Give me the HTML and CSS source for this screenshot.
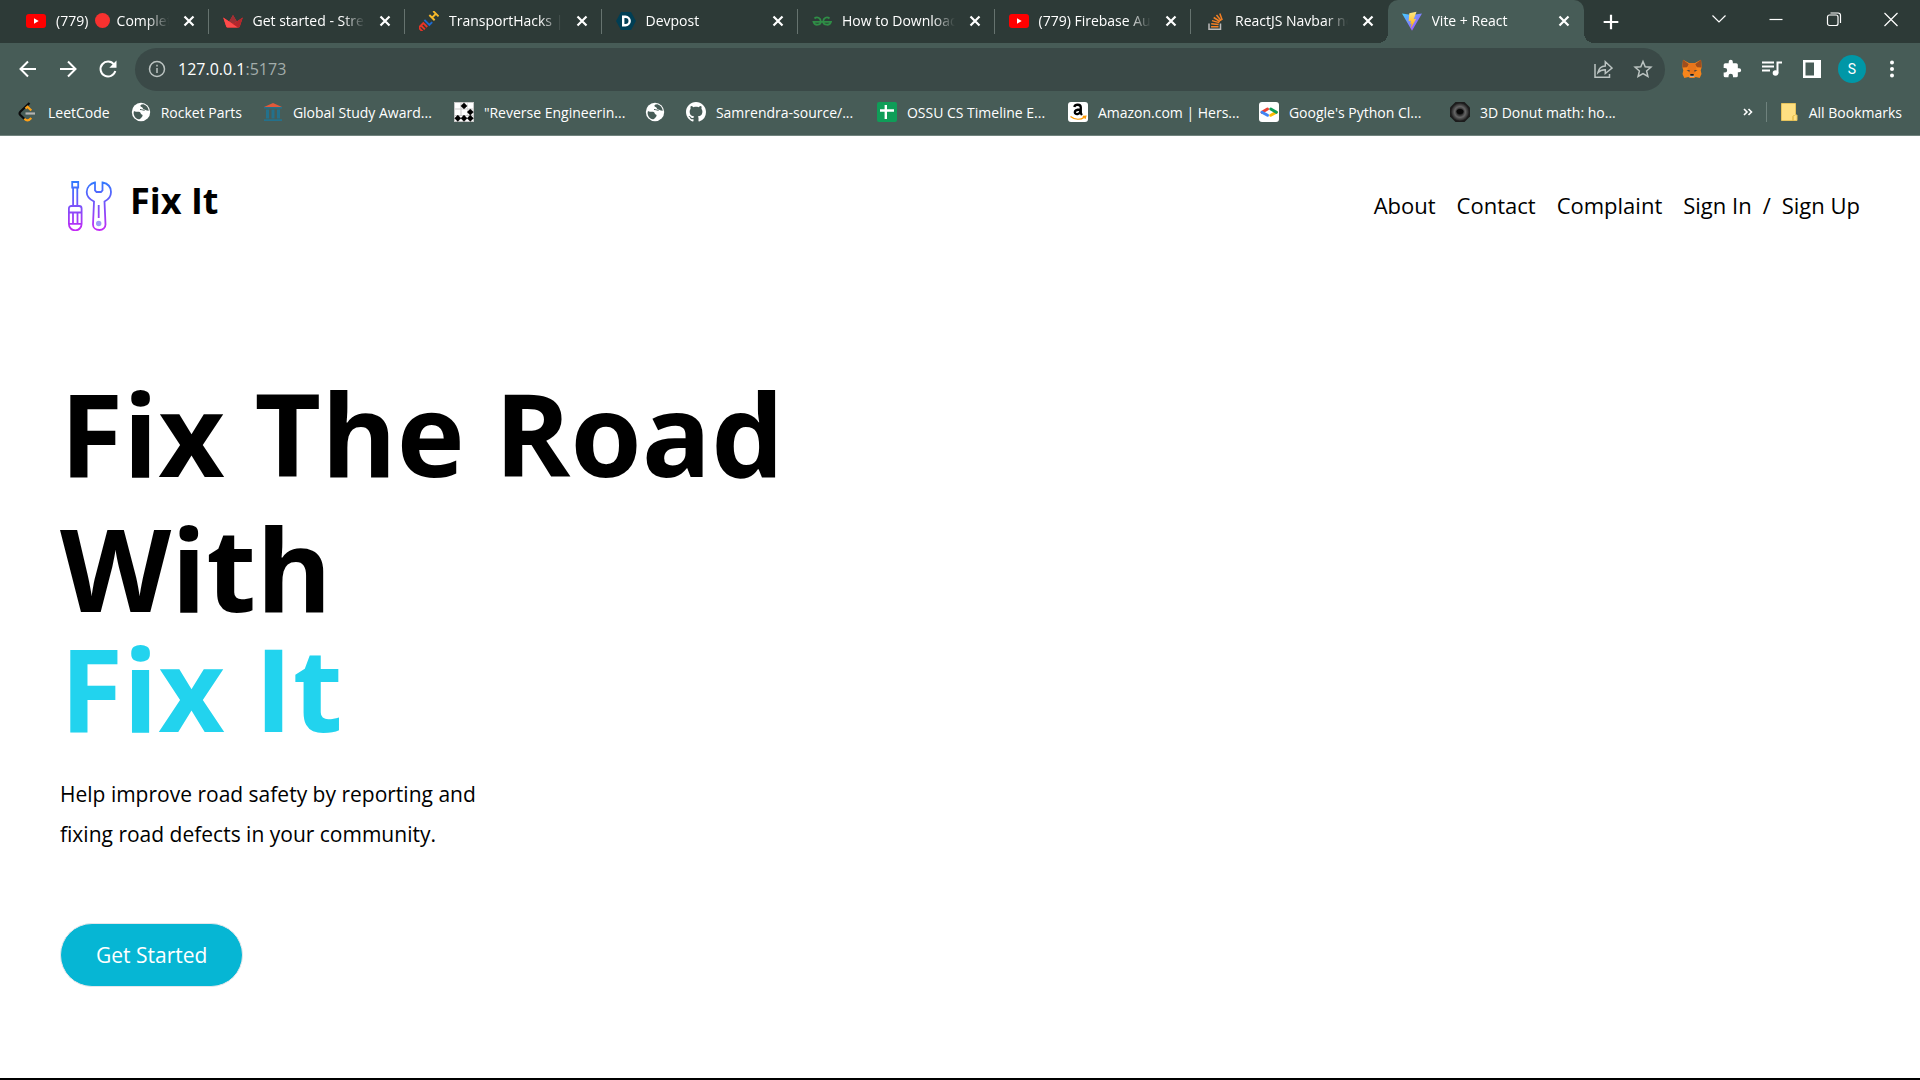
FILE: index.html
```html
<!DOCTYPE html>
<html lang="en">
<head>
<meta charset="utf-8">
<meta name="viewport" content="width=device-width, initial-scale=1">
<title>Vite + React</title>
<link rel="stylesheet" href="styles.css">
</head>
<body>
<svg class="defs" aria-hidden="true">
  <defs>
    <linearGradient id="vite-body" x1="0" y1="0" x2="1" y2="1"><stop offset="0" stop-color="#41d1ff"/><stop offset="1" stop-color="#bd34fe"/></linearGradient>
    <linearGradient id="vite-bolt" x1="0" y1="0" x2="0" y2="1"><stop offset="0" stop-color="#ffea83"/><stop offset="1" stop-color="#ffa800"/></linearGradient>
    <linearGradient id="tools" gradientUnits="userSpaceOnUse" x1="0" y1="0" x2="0" y2="50"><stop offset="0" stop-color="#2f7bff"/><stop offset="1" stop-color="#c528f5"/></linearGradient>
    <radialGradient id="donut"><stop offset="0" stop-color="#0c0c0c"/><stop offset=".25" stop-color="#1a1a1a"/><stop offset=".6" stop-color="#666"/><stop offset="1" stop-color="#222"/></radialGradient>
    <symbol id="close" viewBox="0 0 24 24"><path d="M7.500 7.500l9 9m0-9l-9 9" stroke="#fff" stroke-width="2.200"/></symbol>
    <symbol id="youtube" viewBox="0 0 20 20"><rect y="3" width="20" height="14" rx="3" fill="#f00"/><path d="M8 7.300v5.400l4.700-2.700z" fill="#fff"/></symbol>
    <symbol id="globe" viewBox="0 0 20 20"><circle cx="10" cy="10" r="9.200" fill="#fff"/><path d="M3 9c1 1 3 .6 5 .8 2 .3 1.200 2.200 2.800 2.600 1.500.4.600 2.400-.8 3.600-.8.700-1.200 1.400-2.600 1.300C3.500 16 1.800 12 3 9zM10.500 2.500c-2 1-.7 2.500.5 2.700 1 .2.600 2 2 2.300 1.700.3 2.600 1.300 4.800 1.200-.4-3-2.500-5.700-5.300-6.400z" fill="#475c57"/><path d="M9 7.500c2 0 3 .7 4.500 1" stroke="#475c57" stroke-width="1" fill="none"/></symbol>
  </defs>
</svg>

<header class="browser">
  <div class="tabstrip">
    <div class="tabs">
      <div class="tab">
        <svg class="favicon"><use href="#youtube"/></svg>
        <span class="tab-title">(779) <i class="live"></i> Complet</span>
        <button class="tab-close" aria-label="Close tab"><svg><use href="#close"/></svg></button>
      </div>
      <div class="tab">
        <svg class="favicon" viewBox="0 0 20 20"><path d="M.2 6.500l6 4L10 4l3.800 6.500 6-4-3 9c-.2.700-.7 1-1.300 1h-11c-.6 0-1.100-.3-1.300-1z" fill="#ff2b2b"/><path d="M6.200 10.500L10 4l3.800 6.500L10 13z" fill="#9c3035"/><path d="M.2 6.500L15 16.500H4.500c-.6 0-1.100-.3-1.300-1z" fill="#ff4b4b"/><path d="M19.800 6.500l-6 4-3.800 2.500 5 3.500c1.200 0 1.600-.5 1.800-1z" fill="#b3272c"/></svg>
        <span class="tab-title">Get started - Strea</span>
        <button class="tab-close" aria-label="Close tab"><svg><use href="#close"/></svg></button>
      </div>
      <div class="tab">
        <svg class="favicon" viewBox="0 0 20 20" fill="none" stroke-width="1.900"><g transform="rotate(-45 10 10)"><path d="M-2 13V7.500h6.500V13M1.200 7.500V13" stroke="#e73427"/><path d="M7.500 6v7h4" stroke="#1d6ad0"/><path d="M14.500 6v7.500M20 6v7.500M14.500 9.800H20" stroke="#f8b92a"/></g></svg>
        <span class="tab-title">TransportHacks | M</span>
        <button class="tab-close" aria-label="Close tab"><svg><use href="#close"/></svg></button>
      </div>
      <div class="tab">
        <svg class="favicon" viewBox="0 0 20 20"><path d="M5 1h10l5 9-5 9H5l-5-9z" fill="#003e54"/><path d="M7.200 5.800h2.300a4.200 4.200 0 010 8.400H7.200z" fill="none" stroke="#fff" stroke-width="2.400"/></svg>
        <span class="tab-title">Devpost</span>
        <button class="tab-close" aria-label="Close tab"><svg><use href="#close"/></svg></button>
      </div>
      <div class="tab">
        <svg class="favicon" viewBox="0 0 20 20" fill="none" stroke="#2f8d46" stroke-width="1.800"><path d="M2.500 7.500C5 5 8.800 7 8.800 10.500c0 4-6.300 4.500-7.300.3H19c-1 4.200-7.800 3.700-7.800-.3C11.200 7 15 5 17.500 7.500"/></svg>
        <span class="tab-title">How to Download</span>
        <button class="tab-close" aria-label="Close tab"><svg><use href="#close"/></svg></button>
      </div>
      <div class="tab">
        <svg class="favicon"><use href="#youtube"/></svg>
        <span class="tab-title">(779) Firebase Aut</span>
        <button class="tab-close" aria-label="Close tab"><svg><use href="#close"/></svg></button>
      </div>
      <div class="tab">
        <svg class="favicon" viewBox="0 0 20 20" fill="none" stroke-width="1.500"><path d="M4 12.500v5.800h11.500v-5.800" stroke="#bcbbbb"/><path d="M6 15.800h7.500M6.200 12.800l7.400.8M7 9.600l7.200 2M8.700 6.500l6.300 4M11.500 4l4.700 5.700M14.800 2.500l2.400 6.500" stroke="#f48024"/></svg>
        <span class="tab-title">ReactJS Navbar no</span>
        <button class="tab-close" aria-label="Close tab"><svg><use href="#close"/></svg></button>
      </div>
      <div class="tab tab-active">
        <svg class="favicon" viewBox="0 0 20 20"><path d="M0 2.500l10 1.600 10-1.600-10 17.300z" fill="url(#vite-body)"/><path d="M14.500.8L7.300 2.200l-.6 8 2.200-.5-.7 3.200 1.500-.4-1 5 5.500-9.800-2.500.5z" fill="url(#vite-bolt)"/></svg>
        <span class="tab-title">Vite + React</span>
        <button class="tab-close" aria-label="Close tab"><svg><use href="#close"/></svg></button>
      </div>
    </div>
    <button class="new-tab" aria-label="New tab"><svg viewBox="0 0 24 24"><path d="M12 4v16M4 12h16" stroke="#fff" stroke-width="2.400"/></svg></button>
    <div class="window-controls">
      <button aria-label="Search tabs"><svg viewBox="0 0 24 24"><path d="M5.500 8.500l6.500 6.500 6.500-6.500"/></svg></button>
      <button aria-label="Minimize"><svg viewBox="0 0 24 24"><path d="M5.500 12.500h13"/></svg></button>
      <button aria-label="Restore"><svg viewBox="0 0 24 24"><rect x="5.500" y="8" width="10.500" height="10.500" rx="2"/><path d="M8.500 6h7.500a2.500 2.500 0 012.500 2.500v7.500"/></svg></button>
      <button aria-label="Close window"><svg viewBox="0 0 24 24"><path d="M5.500 6l13 13m0-13l-13 13"/></svg></button>
    </div>
  </div>

  <div class="toolbar">
    <div class="nav-buttons">
      <button aria-label="Back"><svg viewBox="0 0 24 24"><path d="M20 12H4.500M12 4.500L4.500 12l7.500 7.500"/></svg></button>
      <button aria-label="Forward"><svg viewBox="0 0 24 24"><path d="M4 12h15.500M12 4.500l7.500 7.500-7.500 7.500"/></svg></button>
      <button aria-label="Reload"><svg viewBox="0 0 24 24"><path d="M18 7.500A7.500 7.500 0 1019.300 14"/><path d="M20.500 3.500v7.200h-7.200z" fill="#fff" stroke="none"/></svg></button>
    </div>
    <div class="omnibox">
      <svg class="omni-icon" viewBox="0 0 20 20"><circle cx="10" cy="10" r="7.500"/><path d="M10 9v5M10 5.800v1.700"/></svg>
      <div class="url">127.0.0.1<span>:5173</span></div>
      <svg class="omni-icon share" viewBox="0 0 20 20"><path d="M2 5v13.300h14.500V15M5 13.500c.8-4.300 3-6.300 7.300-6.500V2.800L19 9l-6.700 5.500v-3.800c-3.500 0-5.500.7-7.300 2.800z"/></svg>
      <svg class="omni-icon" viewBox="0 0 20 20"><path d="M10 2.500l2.200 5.200 5.700.5-4.300 3.700 1.300 5.500-4.900-2.900-4.900 2.900 1.300-5.500-4.300-3.700 5.700-.5z"/></svg>
    </div>
    <div class="extensions">
      <button aria-label="Wallet"><svg viewBox="0 0 20 20"><path d="M1 .8L7 4h6l6-3.200.7 7.200-1 3.500.8 3.500-1.800 4-4-1-1.700 1H8l-1.700-1-4 1L.5 15l.8-3.500-1-3.500z" fill="#f6851b"/><path d="M1 .8l6 4.500-2 3L.3 8.500zM19 .8l-6 4.500 2 3 4.700.2z" fill="#a04e1d"/><path d="M7 4h6l1.500 6-2.500 5.500H8L5.500 10z" fill="#e8761b"/><path d="M4.500 11l3.500.5-.8 1.300zM15.500 11l-3.500.5.8 1.300z" fill="#233447"/><path d="M7.800 15.500h4.400v2.500H7.800z" fill="#c0ad9e"/><path d="M8.300 15h3.400v1.700H8.300z" fill="#161616"/></svg></button>
      <button aria-label="Extensions"><svg viewBox="0 0 24 24"><path d="M20.500 11H19V7a2 2 0 00-2-2h-4V3.500a2.500 2.500 0 00-5 0V5H4a2 2 0 00-2 2v3.800h1.500a2.700 2.700 0 010 5.400H2V20a2 2 0 002 2h3.800v-1.500a2.700 2.700 0 015.400 0V22H17a2 2 0 002-2v-4h1.500a2.500 2.500 0 000-5z" fill="#fff"/></svg></button>
      <button aria-label="Media"><svg viewBox="0 0 20 20" fill="none" stroke="#fff" stroke-width="2"><path d="M0 3.500h12M0 7.500h12M0 11.500h8M15.500 14.500V3.500H20"/><circle cx="13.500" cy="14" r="2.800" fill="#fff" stroke="none"/></svg></button>
      <button aria-label="Side panel"><svg viewBox="0 0 20 20"><path d="M1 1h18v18H1zM3.500 3.500v13H12v-13z" fill="#fff" fill-rule="evenodd"/></svg></button>
      <button aria-label="Profile"><span class="avatar">S</span></button>
      <button aria-label="Menu"><svg viewBox="0 0 20 20" fill="#fff"><circle cx="10" cy="3.500" r="2"/><circle cx="10" cy="10" r="2"/><circle cx="10" cy="16.500" r="2"/></svg></button>
    </div>
  </div>

  <nav class="bookmarks" aria-label="Bookmarks">
    <a href="#"><svg viewBox="0 0 20 20" fill="none" stroke-width="2.200"><path d="M11.500 1L2.300 9.800c-1 1-1 2.200 0 3.200L6.500 17" stroke="#0b0b0b"/><path d="M7.500 6.500l2-1.800 3.800 3.800M6.300 16.800c2.300 2.200 4 2.500 7-.8" stroke="#ffa116"/><path d="M7.500 11.500H17" stroke="#b3b3b3"/></svg>LeetCode</a>
    <a href="#"><svg><use href="#globe"/></svg>Rocket Parts</a>
    <a href="#" class="cut"><svg viewBox="0 0 20 20"><path d="M1 5l9-4 9 4z" fill="#e2593a"/><path d="M1 5h18v1.500H1zM3 7.500h3v9H3zM8.500 7.500h3v9h-3zM14 7.500h3v9h-3zM1 17.300h18V19H1z" fill="#23718c"/></svg>Global Study Award...</a>
    <a href="#" class="cut"><svg viewBox="0 0 20 20"><path fill="#c8c8c8" d="M0 0h20v20H0z"/><path d="M1 1h5.500v5.500H1zM7.500 1H13v5.500H7.500zM13.500 1H19v5.500h-5.500zM1 7.500h5.500V13H1zM7.500 7.500H13V13H7.500zM13.500 7.500H19V13h-5.500zM1 14h18v5H1z" fill="#fff"/><path d="M10 .7l3.200 3.200L10 7.100 6.800 3.900zM16.300 6.900l3.200 3.200-3.200 3.200-3.200-3.200zM3.800 13.100L7 16.300l-3.200 3.200-3.200-3.200zM10 13.100l3.200 3.200-3.200 3.200-3.200-3.200zM16.300 13.100l3.200 3.200-3.200 3.200-3.200-3.200z" stroke="#000" stroke-width=".3"/></svg>"Reverse Engineerin...</a>
    <a href="#" aria-label="Untitled bookmark"><svg><use href="#globe"/></svg></a>
    <a href="#" class="cut"><svg viewBox="0 0 16 16"><path fill="#fff" d="M8 0C3.580 0 0 3.580 0 8c0 3.540 2.290 6.530 5.470 7.590.4.070.55-.17.55-.38 0-.19-.01-.82-.01-1.490-2.010.37-2.530-.49-2.690-.94-.09-.23-.48-.94-.82-1.130-.28-.15-.68-.52-.01-.53.63-.01 1.080.58 1.230.82.72 1.210 1.870.87 2.330.66.070-.52.28-.87.51-1.070-1.780-.2-3.640-.89-3.640-3.950 0-.87.31-1.590.82-2.150-.08-.2-.36-1.020.080-2.120 0 0 .67-.21 2.200.82.64-.18 1.320-.27 2-.27s1.360.09 2 .27c1.530-1.040 2.200-.82 2.200-.82.44 1.100.16 1.920.080 2.120.51.56.82 1.270.82 2.150 0 3.070-1.870 3.750-3.650 3.950.29.25.54.73.54 1.480 0 1.070-.01 1.930-.01 2.200 0 .21.15.46.55.38A8.010 8.010 0 0016 8c0-4.420-3.580-8-8-8z"/></svg>Samrendra-source/...</a>
    <a href="#" class="cut"><svg viewBox="0 0 20 20"><rect width="20" height="20" rx="2" fill="#0f9d58"/><path d="M8.800 3v14M3 8.500h14" stroke="#fff" stroke-width="2.400"/></svg>OSSU CS Timeline E...</a>
    <a href="#" class="cut"><svg viewBox="0 0 20 20"><rect width="20" height="20" rx="3" fill="#fff"/><path d="M6.300 5C7 2 12.800 1.800 12.800 5.500v5c0 1.200.5 1.600 1.200 2.500M12.500 7.500c-4 0-5.700.7-5.700 2.800 0 3 5.500 2.200 5.700-1.500" fill="none" stroke="#000" stroke-width="2.300"/><path d="M2.500 14.500c4.500 3.500 10 3.500 14 .6M14.800 14.300l3-.1-.8 2.600" fill="none" stroke="#f90" stroke-width="1.300"/></svg>Amazon.com | Hers...</a>
    <a href="#" class="cut"><svg viewBox="0 0 20 20" fill="none" stroke-width="3"><rect width="20" height="20" rx="3" fill="#fff"/><path d="M3 10.300L8.500 7" stroke="#ea4335" stroke-linecap="round"/><path d="M3 10.300l5.500 3" stroke="#4285f4" stroke-linecap="round"/><path d="M11.800 13.300l5.500-3" stroke="#fbbc04" stroke-linecap="round"/><path d="M11.800 7l5.500 3.300" stroke="#0f9d58" stroke-linecap="round"/></svg>Google's Python Cl...</a>
    <a href="#" class="cut"><svg viewBox="0 0 20 20"><path d="M5.500 0h9L20 5.500v9L14.500 20h-9L0 14.500v-9z" fill="#1c1c1c"/><circle cx="10" cy="10" r="9" fill="url(#donut)"/><ellipse cx="10" cy="9.500" rx="3.500" ry="2.500" fill="#080808"/></svg>3D Donut math: ho...</a>
    <button class="more" aria-label="More bookmarks"><svg viewBox="0 0 10 10"><path d="M1 2l3 3-3 3M5.500 2l3 3-3 3"/></svg></button>
    <a href="#" class="all"><svg viewBox="0 0 20 20"><path d="M2.500 1.500h14v11.500h1.500v5.500H2.500z" fill="#ffe082" stroke="#e6c35c"/><path d="M14 18.500v-4l1.500-1.500" fill="none" stroke="#d9ad30"/></svg>All Bookmarks</a>
  </nav>
</header>

<div class="page">
  <div class="site-header">
    <a class="brand" href="#">
      <svg viewBox="0 0 44 50" fill="none" stroke="url(#tools)" stroke-width="1.800"><path d="M4.200 1h6v5.500H9.300V25H5.100V6.500h-.9zM4.200 6.500h6M.9 32v-4.500a2.500 2.500 0 012.500-2.500h7.700a2.500 2.500 0 012.500 2.500V43a6.300 6.300 0 01-12.700 0zM.9 31.500h12.700M.9 42.800h12.700M5 31.500v11.300M9.500 31.500v11.300"/><path d="M27 1.500v8l1.500 1.500h4.500l1.500-1.500v-8c5 1 8.500 4.500 8.500 9.500 0 4-2.500 7.500-6.500 9.500l1 23c0 3-2.500 5.500-6 5.500-4 0-6.500-2.500-6.500-5.500l1-23c-4-2-7.300-5.500-7.300-9.500 0-5 3.800-8.500 8.300-9.500zM30.700 24v13"/><circle cx="30.700" cy="42.500" r="2.700" fill="#9c9cf8" stroke="none"/></svg>
      <span>Fix It</span>
    </a>
    <nav class="site-nav" aria-label="Main">
      <a href="#">About</a>
      <a href="#">Contact</a>
      <a href="#">Complaint</a>
      <span class="auth"><a href="#">Sign In</a><span>/</span><a href="#">Sign Up</a></span>
    </nav>
  </div>
  <main class="hero">
    <h1>Fix The Road With <span>Fix It</span></h1>
    <p>Help improve road safety by reporting and fixing road defects in your community.</p>
    <button class="cta">Get Started</button>
  </main>
</div>
</body>
</html>
```
FILE: styles.css
```css
* { box-sizing: border-box; }

body {
  margin: 0;
  min-height: 100vh;
  display: flex;
  flex-direction: column;
  background: #fff;
  color: #000;
  font-family: "Open Sans", "Noto Sans", sans-serif;
}

button {
  margin: 0;
  padding: 0;
  border: 0;
  background: none;
  color: inherit;
  font: inherit;
}

a { color: inherit; text-decoration: none; }

.defs { position: absolute; width: 0; height: 0; }

/* Browser chrome */
.browser {
  background: #475c57;
  border-bottom: 1px solid #71837e;
  color: #fff;
  font-size: 14px;
}

.tabstrip {
  display: flex;
  height: 43px;
  padding-left: 12px;
  background: #2d3a37;
}

.tabs { display: flex; flex: 1; min-width: 0; }

.tab {
  display: flex;
  flex: 1 1 0;
  align-items: center;
  min-width: 0;
  padding: 0 8px 2px 14px;
  background: linear-gradient(#66736f, #66736f) right center / 1px 25px no-repeat;
}

.tab:nth-last-child(2) { background: none; }

.tab-active {
  position: relative;
  border-radius: 10px 10px 0 0;
  background: #475c57;
}

.tab-active::before,
.tab-active::after {
  content: "";
  position: absolute;
  bottom: 0;
  width: 10px;
  height: 10px;
}

.tab-active::before {
  right: 100%;
  background: radial-gradient(circle at 0 0, #2d3a37 10px, #475c57 10px);
}

.tab-active::after {
  left: 100%;
  background: radial-gradient(circle at 100% 0, #2d3a37 10px, #475c57 10px);
}

.favicon { flex: none; width: 20px; height: 20px; }

.tab-title {
  flex: 1;
  min-width: 0;
  margin: 0 8px 0 10px;
  overflow: hidden;
  line-height: 24px;
  white-space: nowrap;
  -webkit-mask-image: linear-gradient(to right, #000 80%, transparent);
  mask-image: linear-gradient(to right, #000 80%, transparent);
}

.live {
  display: inline-block;
  width: 15px;
  height: 15px;
  margin: 0 3px;
  border-radius: 50%;
  background: #f8312f;
  vertical-align: -2px;
}

.tab-close, .tab-close svg { display: block; width: 24px; height: 24px; }

.new-tab { width: 54px; }
.new-tab svg { display: block; width: 22px; height: 22px; margin: auto; }

.window-controls {
  display: flex;
  width: 230px;
  margin-left: 52px;
  padding-bottom: 6px;
}

.window-controls button { flex: 1; }

.window-controls svg {
  display: block;
  width: 24px;
  height: 24px;
  margin: auto;
  fill: none;
  stroke: #fff;
  stroke-width: 1.2;
}

.toolbar {
  display: flex;
  align-items: center;
  height: 52px;
  padding: 0 8px;
}

.nav-buttons, .extensions { display: flex; }

.nav-buttons button,
.extensions button {
  display: flex;
  align-items: center;
  justify-content: center;
  width: 40px;
  height: 40px;
}

.nav-buttons svg {
  width: 24px;
  height: 24px;
  fill: none;
  stroke: #fff;
  stroke-width: 2;
}

.extensions { margin-left: 7px; }
.extensions svg { width: 20px; height: 20px; }

.avatar {
  width: 28px;
  height: 28px;
  border-radius: 50%;
  background: #0097a7;
  font: 14px/28px Roboto, sans-serif;
}

.omnibox {
  display: flex;
  flex: 1;
  align-items: center;
  height: 43px;
  margin-left: 7px;
  padding: 0 12px;
  border-radius: 22px;
  background: #3a4947;
  font-size: 16px;
}

.omni-icon {
  width: 20px;
  height: 20px;
  fill: none;
  stroke: #bcc4c2;
  stroke-width: 1.5;
}

.share { margin-right: 20px; }

.url { flex: 1; margin-left: 11px; }
.url span { color: #a3adab; }

.bookmarks {
  display: flex;
  align-items: center;
  gap: 21px;
  height: 40px;
  padding: 0 18px 6px;
  white-space: nowrap;
}

.bookmarks a { display: flex; align-items: center; gap: 10px; }
.bookmarks svg { flex: none; width: 20px; height: 20px; }
.bookmarks .cut { width: 170px; }
.bookmarks .more { margin-left: auto; }

.bookmarks .more svg {
  display: block;
  width: 10px;
  height: 10px;
  fill: none;
  stroke: #fff;
  stroke-width: 1.6;
}

.bookmarks .all {
  margin-left: -8px;
  padding-left: 12px;
  border-left: 1px solid #6f827d;
}

/* Site */
.page {
  flex: 1;
  padding: 32px 60px 0;
  border-bottom: 2px solid #000;
}

.site-header {
  display: flex;
  align-items: center;
  justify-content: space-between;
}

.brand {
  display: flex;
  gap: 18px;
  padding: 13px 8px;
  font-size: 36px;
  font-weight: 700;
  line-height: 40px;
}

.brand svg { width: 44px; height: 50px; }

.site-nav, .auth { display: flex; }

.site-nav {
  gap: 21px;
  padding-bottom: 2px;
  font-size: 22px;
  font-weight: 500;
  line-height: 40px;
}

.auth { gap: 11px; }

.hero {
  display: flex;
  flex-direction: column;
  align-items: flex-start;
  padding-top: 121px;
}

h1 {
  max-width: 760px;
  margin: 0;
  font-size: 115px;
  font-weight: 700;
  line-height: 135px;
}

h1 span {
  display: block;
  color: #22d3ee;
  line-height: 105px;
}

p {
  max-width: 430px;
  margin: 34px 0 69px;
  font-size: 21px;
  line-height: 40px;
}

.cta {
  padding: 11px 35px;
  border: 1px solid #e5e7eb;
  border-radius: 32px;
  background: #06b6d4;
  color: #fff;
  font-size: 21px;
  line-height: 40px;
}
```
